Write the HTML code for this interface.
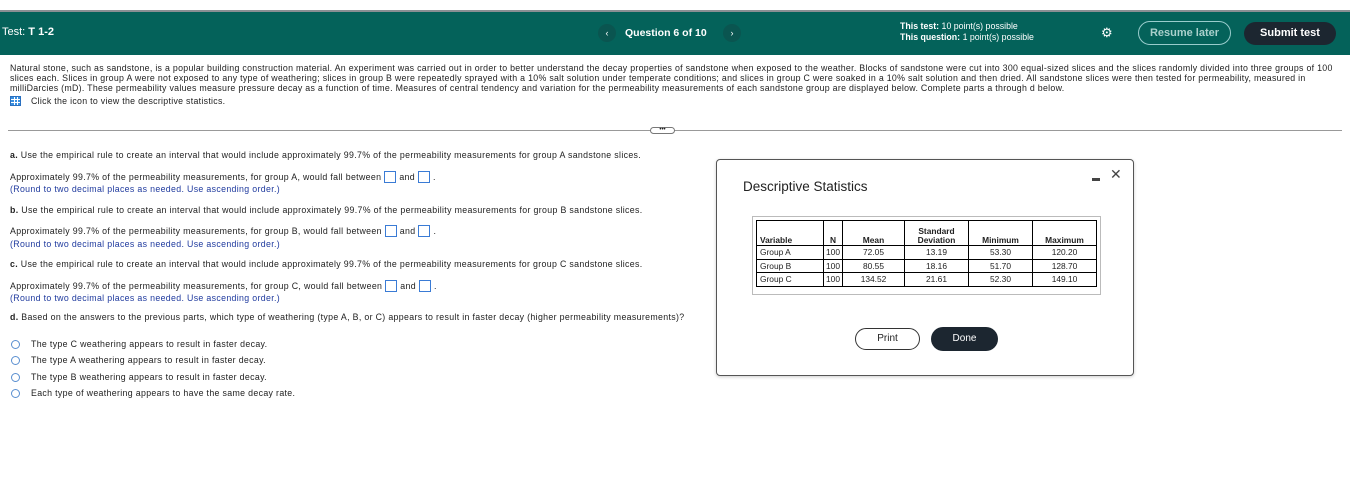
<!DOCTYPE html>
<html><head><style>
*{margin:0;padding:0;box-sizing:border-box}
body{width:1350px;height:496px;background:#fff;font-family:"Liberation Sans",sans-serif;color:#222;position:relative;overflow:hidden}
.abs{position:absolute;white-space:nowrap}
#top{position:absolute;left:0;top:10px;width:1350px;height:2px;background:#8a8f93}
#hdr{position:absolute;left:0;top:12px;width:1350px;height:43px;background:#04625a;color:#fff}
.p{font-size:8.8px;line-height:10px;letter-spacing:0.29px}
.q{font-size:8.8px;color:#222;letter-spacing:0.33px}
.blue{color:#1f3a9e}
.box{display:inline-block;width:12px;height:12px;border:1px solid #3a7bd5;vertical-align:-3px;margin:0 3px}
.rad{position:absolute;width:9px;height:9px;border:1px solid #5a8fd0;border-radius:50%}
table{border-collapse:collapse;font-size:8.4px}
td{border:1px solid #000;padding:0 3px;height:13.5px;text-align:center}
</style></head><body>
<div id="top"></div>
<div id="hdr">
<div class="abs" style="left:2px;top:14px;font-size:11px">Test: <b>T 1-2</b></div>
<div class="abs" style="left:598px;top:12px;width:18px;height:18px;border-radius:50%;background:#0a5550;font-size:9px;text-align:center;line-height:18px">‹</div>
<div class="abs" style="left:625px;top:15px;font-size:10.5px;font-weight:bold">Question 6 of 10</div>
<div class="abs" style="left:723px;top:12px;width:18px;height:18px;border-radius:50%;background:#0a5550;font-size:9px;text-align:center;line-height:18px">›</div>
<div class="abs" style="left:900px;top:9px;font-size:8.8px;line-height:11px;font-weight:bold">This test: <span style="font-weight:normal">10 point(s) possible</span><br>This question: <span style="font-weight:normal">1 point(s) possible</span></div>
<div class="abs" style="left:1101px;top:13px;font-size:13px">⚙</div>
<div class="abs" style="left:1138px;top:9px;width:93px;height:24px;border:1px solid #9cc;border-radius:12px;color:#aad0cc;font-size:11px;text-align:center;line-height:22px;font-weight:bold">Resume later</div>
<div class="abs" style="left:1244px;top:10px;width:92px;height:23px;background:#1c2630;border-radius:12px;font-size:11px;text-align:center;line-height:23px;font-weight:bold">Submit test</div>
</div>
<div class="abs p" style="left:10px;top:63px">Natural stone, such as sandstone, is a popular building construction material. An experiment was carried out in order to better understand the decay properties of sandstone when exposed to the weather. Blocks of sandstone were cut into 300 equal-sized slices and the slices randomly divided into three groups of 100</div>
<div class="abs p" style="left:10px;top:73px">slices each. Slices in group A were not exposed to any type of weathering; slices in group B were repeatedly sprayed with a 10% salt solution under temperate conditions; and slices in group C were soaked in a 10% salt solution and then dried. All sandstone slices were then tested for permeability, measured in</div>
<div class="abs p" style="left:10px;top:83px">milliDarcies (mD). These permeability values measure pressure decay as a function of time. Measures of central tendency and variation for the permeability measurements of each sandstone group are displayed below. Complete parts a through d below.</div>
<div class="abs" style="left:10px;top:96px;width:11px;height:10px;background:#3a8fe0;border:1px solid #2a70c0;background-image:linear-gradient(90deg,transparent 3px,#fff 3px,#fff 4px,transparent 4px,transparent 6px,#fff 6px,#fff 7px,transparent 7px),linear-gradient(transparent 2px,#fff 2px,#fff 3px,transparent 3px,transparent 5px,#fff 5px,#fff 6px,transparent 6px)"></div>
<div class="abs p" style="left:31px;top:96px">Click the icon to view the descriptive statistics.</div>
<div class="abs" style="left:8px;top:130px;width:1334px;height:1px;background:#999"></div>
<div class="abs" style="left:650px;top:127px;width:25px;height:7px;border:1px solid #777;border-radius:4px;background:#fff;font-size:6px;line-height:4px;text-align:center">•••</div>

<div class="abs q" style="left:10px;top:150px"><b>a.</b> Use the empirical rule to create an interval that would include approximately 99.7% of the permeability measurements for group A sandstone slices.</div>
<div class="abs q" style="left:10px;top:171px">Approximately 99.7% of the permeability measurements, for group A, would fall between<span class="box"></span>and<span class="box"></span>.</div>
<div class="abs q blue" style="left:10px;top:184px">(Round to two decimal places as needed. Use ascending order.)</div>
<div class="abs q" style="left:10px;top:205px"><b>b.</b> Use the empirical rule to create an interval that would include approximately 99.7% of the permeability measurements for group B sandstone slices.</div>
<div class="abs q" style="left:10px;top:225px">Approximately 99.7% of the permeability measurements, for group B, would fall between<span class="box"></span>and<span class="box"></span>.</div>
<div class="abs q blue" style="left:10px;top:239px">(Round to two decimal places as needed. Use ascending order.)</div>
<div class="abs q" style="left:10px;top:259px"><b>c.</b> Use the empirical rule to create an interval that would include approximately 99.7% of the permeability measurements for group C sandstone slices.</div>
<div class="abs q" style="left:10px;top:280px">Approximately 99.7% of the permeability measurements, for group C, would fall between<span class="box"></span>and<span class="box"></span>.</div>
<div class="abs q blue" style="left:10px;top:293px">(Round to two decimal places as needed. Use ascending order.)</div>
<div class="abs q" style="left:10px;top:312px"><b>d.</b> Based on the answers to the previous parts, which type of weathering (type A, B, or C) appears to result in faster decay (higher permeability measurements)?</div>
<div class="rad" style="left:11px;top:340px"></div><div class="abs q" style="left:31px;top:339px">The type C weathering appears to result in faster decay.</div>
<div class="rad" style="left:11px;top:356px"></div><div class="abs q" style="left:31px;top:355px">The type A weathering appears to result in faster decay.</div>
<div class="rad" style="left:11px;top:373px"></div><div class="abs q" style="left:31px;top:372px">The type B weathering appears to result in faster decay.</div>
<div class="rad" style="left:11px;top:389px"></div><div class="abs q" style="left:31px;top:388px">Each type of weathering appears to have the same decay rate.</div>

<div class="abs" style="left:716px;top:159px;width:418px;height:217px;border:1px solid #555;border-radius:4px;background:#fff;box-shadow:0 1px 3px rgba(0,0,0,.2)">
<div class="abs" style="left:26px;top:19px;font-size:13.5px;color:#222">Descriptive Statistics</div>
<div class="abs" style="left:375px;top:18px;width:8px;height:3px;background:#444"></div>
<div class="abs" style="left:393px;top:6px;font-size:14px;color:#444">✕</div>
<div class="abs" style="left:35px;top:56px;width:349px;height:79px;border:1px solid #bbb"></div>
<table class="abs" style="left:39px;top:60px;width:341px;border:1.5px solid #000">
<tr style="font-weight:bold"><td style="text-align:left;width:67px;vertical-align:bottom;height:25px">Variable</td><td style="width:19px;vertical-align:bottom;padding:0">N</td><td style="width:62px;vertical-align:bottom">Mean</td><td style="width:64px;vertical-align:bottom;line-height:9px">Standard<br>Deviation</td><td style="width:64px;vertical-align:bottom">Minimum</td><td style="vertical-align:bottom">Maximum</td></tr>
<tr><td style="text-align:left">Group A</td><td style="padding:0">100</td><td>72.05</td><td>13.19</td><td>53.30</td><td>120.20</td></tr>
<tr><td style="text-align:left">Group B</td><td style="padding:0">100</td><td>80.55</td><td>18.16</td><td>51.70</td><td>128.70</td></tr>
<tr><td style="text-align:left">Group C</td><td style="padding:0">100</td><td>134.52</td><td>21.61</td><td>52.30</td><td>149.10</td></tr>
</table>
<div class="abs" style="left:138px;top:168px;width:65px;height:22px;border:1px solid #333;border-radius:11px;font-size:10px;text-align:center;line-height:20px">Print</div>
<div class="abs" style="left:214px;top:167px;width:67px;height:24px;background:#1c2630;color:#fff;border-radius:12px;font-size:10px;text-align:center;line-height:24px">Done</div>
</div>
</body></html>
